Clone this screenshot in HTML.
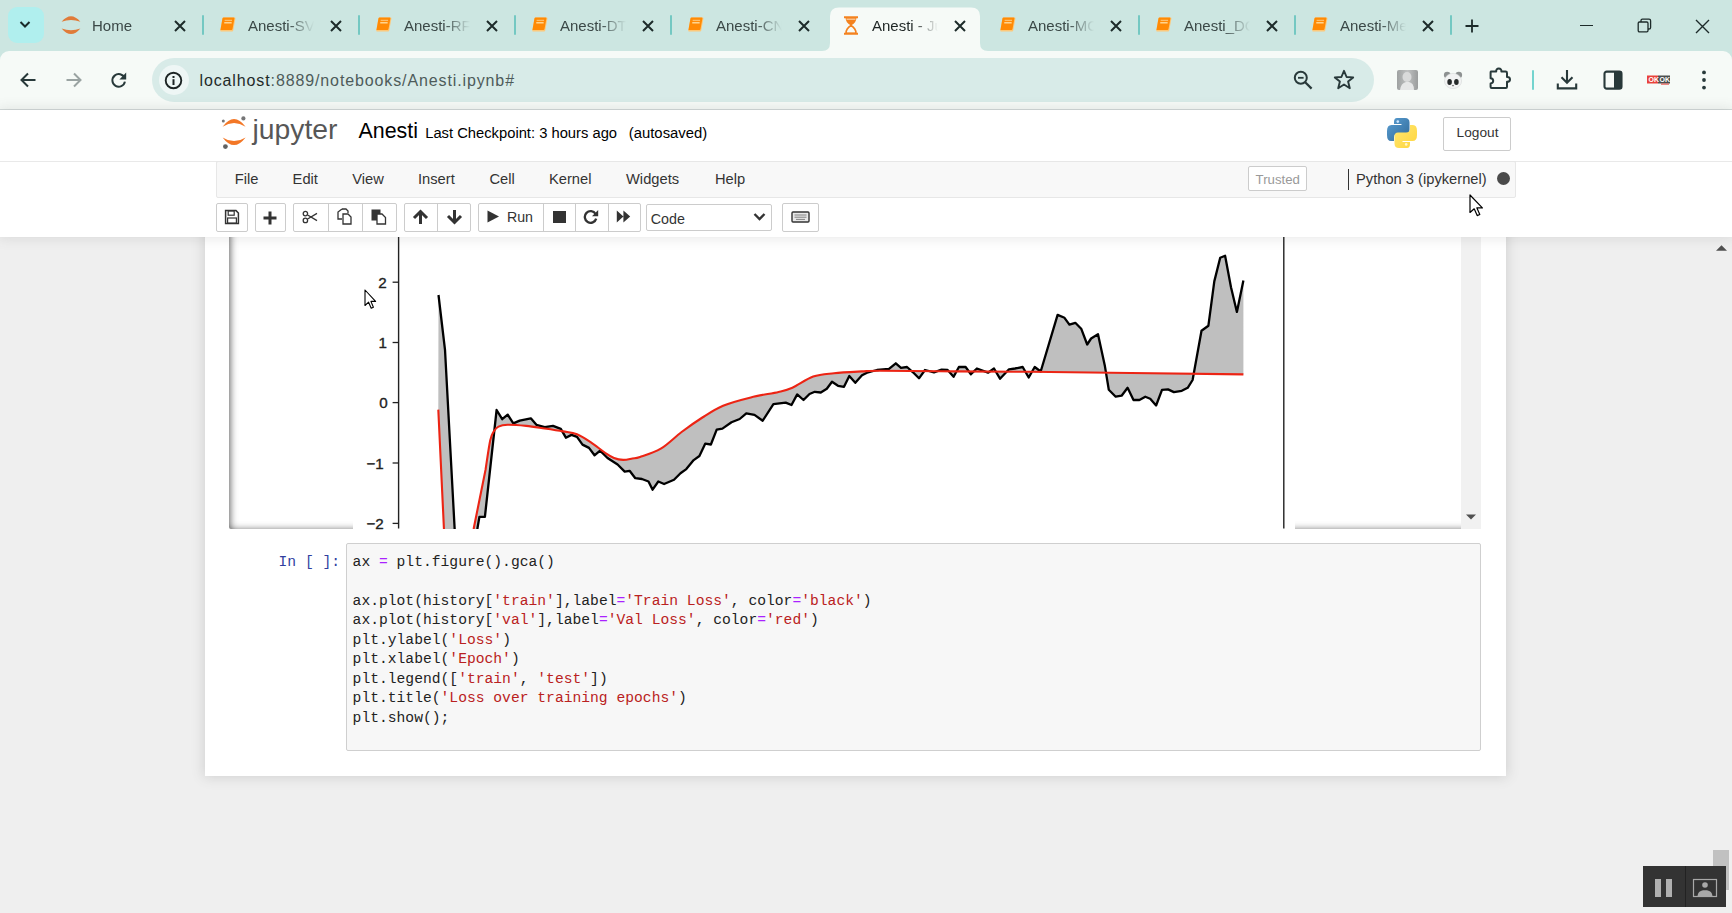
<!DOCTYPE html>
<html><head><meta charset="utf-8">
<style>
*{box-sizing:border-box;margin:0;padding:0}
html,body{width:1732px;height:913px;overflow:hidden;background:#efefef;font-family:"Liberation Sans",sans-serif;position:relative}
.a{position:absolute}
svg{display:block}
#tabstrip{left:0;top:0;width:1732px;height:70px;background:#cce6e1}
#toolbar{left:0;top:51px;width:1732px;height:58px;background:#f6faf7;border-radius:9px 9px 0 0}
#tbline{left:0;top:109px;width:1732px;height:1px;background:#d3dad9}
.ttl{position:absolute;top:16px;height:20px;font-size:15px;color:#3b4847;white-space:nowrap;overflow:hidden;line-height:20px;width:80px;
 -webkit-mask-image:linear-gradient(to right,#000 40px,transparent 66px);mask-image:linear-gradient(to right,#000 40px,transparent 66px)}
.sep{top:15px;width:2px;height:20px;background:#74c8c2;border-radius:1px}
#omni{left:152px;top:58px;width:1222px;height:44px;border-radius:22px;background:#d8ebe8}
#header{left:0;top:110px;width:1732px;height:127px;background:#fff;box-shadow:0 0 12px 1px rgba(87,87,87,.15)}
#menubar{left:216px;top:161px;width:1300px;height:37px;background:#f8f8f8;border:1px solid #e7e7e7;border-radius:2px}
.menu{top:170px;font-size:14.7px;color:#333;line-height:18px}
.btn{top:203px;height:29px;background:#fff;border:1px solid #ccc;border-radius:2px}
.bdiv{top:204px;width:1px;height:27px;background:#ccc}
#nbc{left:205px;top:150px;width:1301px;height:626px;background:#fff;box-shadow:0 0 12px 1px rgba(87,87,87,.2)}
.code{font-family:"Liberation Mono",monospace;font-size:14.67px;line-height:19.5px;color:#000;white-space:pre}
.s{color:#ba2121}.o{color:#aa22ff}
</style></head>
<body>
<div id="nbc" class="a"></div>
<div class="a" style="left:229px;top:150px;width:1252px;height:378.5px;border-radius:2px;box-shadow:inset 0 2px 8px rgba(0,0,0,.8);overflow:hidden"></div>
<div class="a" style="left:353px;top:150px;width:942px;height:378.5px;background:#fff"></div>
<div class="a" style="left:1461px;top:150px;width:20px;height:378.5px;background:#f1f1f1"></div>
<svg class="a" style="left:1466px;top:514px" width="10" height="6" viewBox="0 0 10 6"><path d="M0 0.5 H10 L5 5.5Z" fill="#505050"/></svg>
<svg class="a" style="left:229px;top:150px" width="1232" height="378.5" viewBox="229 150 1232 378.5">
<polygon points="438.5,295.0 445.0,349.8 454.6,528.0 466.0,720.0 477.5,528.0 479.4,516.9 484.9,516.9 496.6,410.0 502.2,419.2 507.7,414.6 513.3,423.4 519.7,420.6 530.8,418.3 536.4,424.8 544.7,427.1 553.0,425.9 560.8,428.9 565.9,437.7 571.5,434.9 577.0,436.8 582.5,444.6 589.0,447.9 594.5,455.3 600.1,450.6 607.5,458.0 617.6,464.5 624.7,471.6 629.6,470.8 635.3,478.2 641.9,479.0 648.5,481.5 652.6,489.7 658.3,481.5 664.1,484.0 674.0,479.8 680.5,473.3 686.3,469.1 693.7,460.1 699.4,456.0 705.2,443.7 710.9,444.5 716.7,429.7 722.4,428.6 731.5,422.3 739.7,419.0 746.3,413.3 754.5,414.9 762.7,420.7 773.4,404.2 785.7,402.6 791.5,405.0 797.2,394.4 803.5,400.0 809.5,394.0 814.8,391.8 820.8,392.5 826.8,388.8 832.0,381.7 838.0,385.8 844.0,386.8 849.3,376.0 855.3,382.8 862.0,375.3 868.0,372.3 877.0,370.0 889.0,368.8 895.8,363.3 901.0,367.8 907.0,367.0 913.0,372.3 919.0,378.3 925.0,370.0 934.0,372.3 941.6,369.7 947.6,370.0 953.6,376.8 958.9,367.0 965.6,367.0 970.9,374.2 976.9,368.5 988.0,372.7 994.0,368.5 1000.0,378.7 1009.0,369.3 1015.0,368.5 1022.7,367.0 1028.7,377.5 1034.7,367.0 1040.7,371.5 1057.6,314.9 1064.5,317.8 1069.4,324.7 1075.3,322.8 1081.2,328.7 1087.2,344.5 1091.1,338.5 1098.0,334.2 1104.9,366.1 1108.8,389.8 1115.7,396.7 1121.6,395.7 1127.6,387.8 1133.5,400.0 1139.4,400.0 1145.3,396.7 1150.2,398.7 1156.1,405.5 1162.0,389.8 1168.0,389.4 1173.9,392.1 1181.8,390.8 1187.7,387.8 1192.6,380.0 1201.5,330.7 1208.4,325.7 1214.3,281.4 1220.2,257.7 1225.1,255.8 1231.0,287.3 1236.9,311.9 1243.4,280.4 1243.4,374.4 1030.0,371.8 940.0,371.3 880.0,370.8 861.7,371.4 834.0,373.2 813.2,376.6 792.4,387.7 778.6,391.9 750.8,397.4 723.1,405.7 702.4,417.5 681.6,432.0 660.8,448.7 640.0,457.0 632.4,458.5 623.2,459.9 614.0,458.0 604.7,452.5 590.9,442.3 577.0,434.2 563.1,431.4 544.7,428.5 526.2,425.9 507.7,424.8 498.5,426.6 493.9,431.2 490.2,440.5 485.5,470.0 473.8,528.0 458.0,800.0 443.9,528.0 438.3,409.6" fill="#bfbfbf" stroke="none"/>
<polyline points="438.5,295.0 445.0,349.8 454.6,528.0 466.0,720.0 477.5,528.0 479.4,516.9 484.9,516.9 496.6,410.0 502.2,419.2 507.7,414.6 513.3,423.4 519.7,420.6 530.8,418.3 536.4,424.8 544.7,427.1 553.0,425.9 560.8,428.9 565.9,437.7 571.5,434.9 577.0,436.8 582.5,444.6 589.0,447.9 594.5,455.3 600.1,450.6 607.5,458.0 617.6,464.5 624.7,471.6 629.6,470.8 635.3,478.2 641.9,479.0 648.5,481.5 652.6,489.7 658.3,481.5 664.1,484.0 674.0,479.8 680.5,473.3 686.3,469.1 693.7,460.1 699.4,456.0 705.2,443.7 710.9,444.5 716.7,429.7 722.4,428.6 731.5,422.3 739.7,419.0 746.3,413.3 754.5,414.9 762.7,420.7 773.4,404.2 785.7,402.6 791.5,405.0 797.2,394.4 803.5,400.0 809.5,394.0 814.8,391.8 820.8,392.5 826.8,388.8 832.0,381.7 838.0,385.8 844.0,386.8 849.3,376.0 855.3,382.8 862.0,375.3 868.0,372.3 877.0,370.0 889.0,368.8 895.8,363.3 901.0,367.8 907.0,367.0 913.0,372.3 919.0,378.3 925.0,370.0 934.0,372.3 941.6,369.7 947.6,370.0 953.6,376.8 958.9,367.0 965.6,367.0 970.9,374.2 976.9,368.5 988.0,372.7 994.0,368.5 1000.0,378.7 1009.0,369.3 1015.0,368.5 1022.7,367.0 1028.7,377.5 1034.7,367.0 1040.7,371.5 1057.6,314.9 1064.5,317.8 1069.4,324.7 1075.3,322.8 1081.2,328.7 1087.2,344.5 1091.1,338.5 1098.0,334.2 1104.9,366.1 1108.8,389.8 1115.7,396.7 1121.6,395.7 1127.6,387.8 1133.5,400.0 1139.4,400.0 1145.3,396.7 1150.2,398.7 1156.1,405.5 1162.0,389.8 1168.0,389.4 1173.9,392.1 1181.8,390.8 1187.7,387.8 1192.6,380.0 1201.5,330.7 1208.4,325.7 1214.3,281.4 1220.2,257.7 1225.1,255.8 1231.0,287.3 1236.9,311.9 1243.4,280.4" fill="none" stroke="#000" stroke-width="2.3" stroke-linejoin="round"/>
<path d="M438.3,409.6 L443.9,528.0 L458.0,800.0 L473.8,528.0 L485.5,470.0 C486.3,465.1 488.8,447.0 490.2,440.5 C491.6,434.0 492.5,433.5 493.9,431.2 C495.3,428.9 496.2,427.7 498.5,426.6 C500.8,425.5 503.1,424.9 507.7,424.8 C512.3,424.7 520.0,425.3 526.2,425.9 C532.4,426.5 538.6,427.6 544.7,428.5 C550.9,429.4 557.7,430.4 563.1,431.4 C568.5,432.3 572.4,432.4 577.0,434.2 C581.6,436.0 586.3,439.2 590.9,442.3 C595.5,445.4 600.9,449.9 604.7,452.5 C608.6,455.1 610.9,456.8 614.0,458.0 C617.1,459.2 620.1,459.8 623.2,459.9 C626.3,460.0 629.6,459.0 632.4,458.5 C635.2,458.0 635.3,458.6 640.0,457.0 C644.7,455.4 653.9,452.9 660.8,448.7 C667.7,444.5 674.7,437.2 681.6,432.0 C688.5,426.8 695.5,421.9 702.4,417.5 C709.3,413.1 715.0,409.1 723.1,405.7 C731.2,402.3 741.5,399.7 750.8,397.4 C760.0,395.1 771.7,393.5 778.6,391.9 C785.5,390.3 786.6,390.2 792.4,387.7 C798.2,385.1 806.3,379.0 813.2,376.6 C820.1,374.2 825.9,374.1 834.0,373.2 C842.1,372.3 854.0,371.8 861.7,371.4 C869.4,371.0 867.0,370.8 880.0,370.8 C893.0,370.8 915.0,371.1 940.0,371.3 C965.0,371.5 979.4,371.3 1030.0,371.8 C1080.6,372.3 1207.8,374.0 1243.4,374.4" fill="none" stroke="#ec2414" stroke-width="2.1" stroke-linejoin="round"/>
<path d="M398.6 150 V528.5 M1283.8 150 V528.5" stroke="#222" stroke-width="1.4"/>
<path d="M392.6 282.2 H398.6" stroke="#222" stroke-width="1.3"/><path d="M392.6 342.5 H398.6" stroke="#222" stroke-width="1.3"/><path d="M392.6 402.6 H398.6" stroke="#222" stroke-width="1.3"/><path d="M392.6 463 H398.6" stroke="#222" stroke-width="1.3"/><path d="M392.6 523.4 H398.6" stroke="#222" stroke-width="1.3"/></svg>
<div class="a" style="left:378.3px;top:274.83px;font-family:'Liberation Sans';font-size:15.2px;line-height:15.2px;color:#222;white-space:nowrap;-webkit-text-stroke:0.35px #222;">2</div>
<div class="a" style="left:378.6px;top:335.13px;font-family:'Liberation Sans';font-size:15.2px;line-height:15.2px;color:#222;white-space:nowrap;-webkit-text-stroke:0.35px #222;">1</div>
<div class="a" style="left:379.2px;top:395.23px;font-family:'Liberation Sans';font-size:15.2px;line-height:15.2px;color:#222;white-space:nowrap;-webkit-text-stroke:0.35px #222;">0</div>
<div class="a" style="left:366.5px;top:455.63px;font-family:'Liberation Sans';font-size:15.2px;line-height:15.2px;color:#222;white-space:nowrap;-webkit-text-stroke:0.35px #222;">−1</div>
<div class="a" style="left:366.5px;top:516.03px;font-family:'Liberation Sans';font-size:15.2px;line-height:15.2px;color:#222;white-space:nowrap;-webkit-text-stroke:0.35px #222;">−2</div>
<div class="a" style="left:278.5px;top:554.98px;font-family:'Liberation Mono';font-size:14.67px;line-height:14.67px;color:#303f9f;white-space:nowrap;">In&nbsp;[&nbsp;]:</div>
<div class="a" style="left:346.4px;top:543px;width:1135px;height:208px;background:#f7f7f7;border:1px solid #cfcfcf;border-radius:2px"></div>
<div class="a" style="left:352.6px;top:554.98px;font-family:'Liberation Mono';font-size:14.67px;line-height:14.67px;color:#222;white-space:nowrap;white-space:pre;">ax <span class="o">=</span> plt.figure().gca()</div>
<div class="a" style="left:352.6px;top:593.98px;font-family:'Liberation Mono';font-size:14.67px;line-height:14.67px;color:#222;white-space:nowrap;white-space:pre;">ax.plot(history[<span class="s">'train'</span>],label<span class="o">=</span><span class="s">'Train Loss'</span>, color<span class="o">=</span><span class="s">'black'</span>)</div>
<div class="a" style="left:352.6px;top:613.48px;font-family:'Liberation Mono';font-size:14.67px;line-height:14.67px;color:#222;white-space:nowrap;white-space:pre;">ax.plot(history[<span class="s">'val'</span>],label<span class="o">=</span><span class="s">'Val Loss'</span>, color<span class="o">=</span><span class="s">'red'</span>)</div>
<div class="a" style="left:352.6px;top:632.98px;font-family:'Liberation Mono';font-size:14.67px;line-height:14.67px;color:#222;white-space:nowrap;white-space:pre;">plt.ylabel(<span class="s">'Loss'</span>)</div>
<div class="a" style="left:352.6px;top:652.48px;font-family:'Liberation Mono';font-size:14.67px;line-height:14.67px;color:#222;white-space:nowrap;white-space:pre;">plt.xlabel(<span class="s">'Epoch'</span>)</div>
<div class="a" style="left:352.6px;top:671.98px;font-family:'Liberation Mono';font-size:14.67px;line-height:14.67px;color:#222;white-space:nowrap;white-space:pre;">plt.legend([<span class="s">'train'</span>, <span class="s">'test'</span>])</div>
<div class="a" style="left:352.6px;top:691.48px;font-family:'Liberation Mono';font-size:14.67px;line-height:14.67px;color:#222;white-space:nowrap;white-space:pre;">plt.title(<span class="s">'Loss over training epochs'</span>)</div>
<div class="a" style="left:352.6px;top:710.98px;font-family:'Liberation Mono';font-size:14.67px;line-height:14.67px;color:#222;white-space:nowrap;white-space:pre;">plt.show();</div>
<div class="a" style="left:1712px;top:237px;width:20px;height:676px;background:#efefef"></div>
<svg class="a" style="left:1716px;top:245px" width="11" height="6" viewBox="0 0 11 6"><path d="M0 5.8 H11 L5.5 0.2Z" fill="#505050"/></svg>
<div class="a" style="left:1713px;top:850px;width:16px;height:40px;background:#c1c1c1"></div>
<div id="tabstrip" class="a"></div>
<div class="a" style="left:8px;top:7px;width:36px;height:36px;border-radius:9px;background:#b0efee"></div>
<svg class="a" style="left:19px;top:20px" width="12" height="9" viewBox="0 0 12 9"><path d="M1.5 2 L6 6.5 L10.5 2" fill="none" stroke="#1a2b2a" stroke-width="2"/></svg>
<svg class="a" style="left:822px;top:6px" width="166" height="45" viewBox="0 0 166 45"><path d="M0 45 Q8 45 8 37 V10 Q8 1.5 17 1.5 H149 Q158 1.5 158 10 V37 Q158 45 166 45 Z" fill="#f6faf7"/></svg>
<svg class="a" style="left:61px;top:15px" width="20" height="21" viewBox="0 0 20 21"><path d="M0.6 6.8 Q10 -4.2 19.4 6.8 Q10 3.2 0.6 6.8Z" fill="#e07b39"/><path d="M0.6 13.4 Q10 24.6 19.4 13.4 Q10 17 0.6 13.4Z" fill="#e07b39"/></svg>
<div class="ttl" style="left:92px;color:#3b4847">Home</div>
<svg class="a" style="left:174px;top:20px" width="12" height="12" viewBox="0 0 12 12"><path d="M1 1 L11 11 M11 1 L1 11" stroke="#1d2b2a" stroke-width="2"/></svg>
<svg class="a" style="left:217.5px;top:17px" width="19" height="16" viewBox="-0.8 0 18.5 16">
<path d="M4.6 0.6 H15.6 Q16.6 0.6 16.4 1.6 L14.2 13.6 Q14 14.6 13 14.6 H2 Q1 14.6 1.2 13.6 L3.4 1.6 Q3.6 0.6 4.6 0.6Z" fill="#fec879"/>
<path d="M4.6 0.6 H14.6 Q15.6 0.6 15.4 1.6 L13.4 12.2 Q13.2 13 12.4 13 H1.4 L3.4 1.6 Q3.6 0.6 4.6 0.6Z" fill="#ff8a05"/>
<path d="M5.6 3.4 H13" stroke="#ffbf6a" stroke-width="1.3"/><path d="M5.2 5.8 H12.6" stroke="#ffe2a8" stroke-width="1.3"/>
</svg>
<div class="ttl" style="left:248px;color:#3b4847">Anesti-SV</div>
<svg class="a" style="left:330px;top:20px" width="12" height="12" viewBox="0 0 12 12"><path d="M1 1 L11 11 M11 1 L1 11" stroke="#1d2b2a" stroke-width="2"/></svg>
<svg class="a" style="left:373.5px;top:17px" width="19" height="16" viewBox="-0.8 0 18.5 16">
<path d="M4.6 0.6 H15.6 Q16.6 0.6 16.4 1.6 L14.2 13.6 Q14 14.6 13 14.6 H2 Q1 14.6 1.2 13.6 L3.4 1.6 Q3.6 0.6 4.6 0.6Z" fill="#fec879"/>
<path d="M4.6 0.6 H14.6 Q15.6 0.6 15.4 1.6 L13.4 12.2 Q13.2 13 12.4 13 H1.4 L3.4 1.6 Q3.6 0.6 4.6 0.6Z" fill="#ff8a05"/>
<path d="M5.6 3.4 H13" stroke="#ffbf6a" stroke-width="1.3"/><path d="M5.2 5.8 H12.6" stroke="#ffe2a8" stroke-width="1.3"/>
</svg>
<div class="ttl" style="left:404px;color:#3b4847">Anesti-RF</div>
<svg class="a" style="left:486px;top:20px" width="12" height="12" viewBox="0 0 12 12"><path d="M1 1 L11 11 M11 1 L1 11" stroke="#1d2b2a" stroke-width="2"/></svg>
<svg class="a" style="left:529.5px;top:17px" width="19" height="16" viewBox="-0.8 0 18.5 16">
<path d="M4.6 0.6 H15.6 Q16.6 0.6 16.4 1.6 L14.2 13.6 Q14 14.6 13 14.6 H2 Q1 14.6 1.2 13.6 L3.4 1.6 Q3.6 0.6 4.6 0.6Z" fill="#fec879"/>
<path d="M4.6 0.6 H14.6 Q15.6 0.6 15.4 1.6 L13.4 12.2 Q13.2 13 12.4 13 H1.4 L3.4 1.6 Q3.6 0.6 4.6 0.6Z" fill="#ff8a05"/>
<path d="M5.6 3.4 H13" stroke="#ffbf6a" stroke-width="1.3"/><path d="M5.2 5.8 H12.6" stroke="#ffe2a8" stroke-width="1.3"/>
</svg>
<div class="ttl" style="left:560px;color:#3b4847">Anesti-DT</div>
<svg class="a" style="left:642px;top:20px" width="12" height="12" viewBox="0 0 12 12"><path d="M1 1 L11 11 M11 1 L1 11" stroke="#1d2b2a" stroke-width="2"/></svg>
<svg class="a" style="left:685.5px;top:17px" width="19" height="16" viewBox="-0.8 0 18.5 16">
<path d="M4.6 0.6 H15.6 Q16.6 0.6 16.4 1.6 L14.2 13.6 Q14 14.6 13 14.6 H2 Q1 14.6 1.2 13.6 L3.4 1.6 Q3.6 0.6 4.6 0.6Z" fill="#fec879"/>
<path d="M4.6 0.6 H14.6 Q15.6 0.6 15.4 1.6 L13.4 12.2 Q13.2 13 12.4 13 H1.4 L3.4 1.6 Q3.6 0.6 4.6 0.6Z" fill="#ff8a05"/>
<path d="M5.6 3.4 H13" stroke="#ffbf6a" stroke-width="1.3"/><path d="M5.2 5.8 H12.6" stroke="#ffe2a8" stroke-width="1.3"/>
</svg>
<div class="ttl" style="left:716px;color:#3b4847">Anesti-CN</div>
<svg class="a" style="left:798px;top:20px" width="12" height="12" viewBox="0 0 12 12"><path d="M1 1 L11 11 M11 1 L1 11" stroke="#1d2b2a" stroke-width="2"/></svg>
<svg class="a" style="left:843px;top:16px" width="16" height="19" viewBox="0 0 16 19"><path d="M1 1.2 H15 M1 17.8 H15" stroke="#f4821f" stroke-width="2"/><path d="M2.6 2 H13.4 Q13.4 6.5 8 9.5 Q2.6 6.5 2.6 2Z" fill="#f4821f"/><path d="M8 9.5 Q3 12.5 3 17.2 H13 Q13 12.5 8 9.5Z" fill="none" stroke="#f4821f" stroke-width="1.6"/><path d="M3.5 3.2 H12.5" stroke="#fde6cc" stroke-width="0.9"/></svg>
<div class="ttl" style="left:872px;color:#1f2625">Anesti - Jupyter</div>
<svg class="a" style="left:954px;top:20px" width="12" height="12" viewBox="0 0 12 12"><path d="M1 1 L11 11 M11 1 L1 11" stroke="#1d2b2a" stroke-width="2"/></svg>
<svg class="a" style="left:997.5px;top:17px" width="19" height="16" viewBox="-0.8 0 18.5 16">
<path d="M4.6 0.6 H15.6 Q16.6 0.6 16.4 1.6 L14.2 13.6 Q14 14.6 13 14.6 H2 Q1 14.6 1.2 13.6 L3.4 1.6 Q3.6 0.6 4.6 0.6Z" fill="#fec879"/>
<path d="M4.6 0.6 H14.6 Q15.6 0.6 15.4 1.6 L13.4 12.2 Q13.2 13 12.4 13 H1.4 L3.4 1.6 Q3.6 0.6 4.6 0.6Z" fill="#ff8a05"/>
<path d="M5.6 3.4 H13" stroke="#ffbf6a" stroke-width="1.3"/><path d="M5.2 5.8 H12.6" stroke="#ffe2a8" stroke-width="1.3"/>
</svg>
<div class="ttl" style="left:1028px;color:#3b4847">Anesti-MC</div>
<svg class="a" style="left:1110px;top:20px" width="12" height="12" viewBox="0 0 12 12"><path d="M1 1 L11 11 M11 1 L1 11" stroke="#1d2b2a" stroke-width="2"/></svg>
<svg class="a" style="left:1153.5px;top:17px" width="19" height="16" viewBox="-0.8 0 18.5 16">
<path d="M4.6 0.6 H15.6 Q16.6 0.6 16.4 1.6 L14.2 13.6 Q14 14.6 13 14.6 H2 Q1 14.6 1.2 13.6 L3.4 1.6 Q3.6 0.6 4.6 0.6Z" fill="#fec879"/>
<path d="M4.6 0.6 H14.6 Q15.6 0.6 15.4 1.6 L13.4 12.2 Q13.2 13 12.4 13 H1.4 L3.4 1.6 Q3.6 0.6 4.6 0.6Z" fill="#ff8a05"/>
<path d="M5.6 3.4 H13" stroke="#ffbf6a" stroke-width="1.3"/><path d="M5.2 5.8 H12.6" stroke="#ffe2a8" stroke-width="1.3"/>
</svg>
<div class="ttl" style="left:1184px;color:#3b4847">Anesti_DC</div>
<svg class="a" style="left:1266px;top:20px" width="12" height="12" viewBox="0 0 12 12"><path d="M1 1 L11 11 M11 1 L1 11" stroke="#1d2b2a" stroke-width="2"/></svg>
<svg class="a" style="left:1309.5px;top:17px" width="19" height="16" viewBox="-0.8 0 18.5 16">
<path d="M4.6 0.6 H15.6 Q16.6 0.6 16.4 1.6 L14.2 13.6 Q14 14.6 13 14.6 H2 Q1 14.6 1.2 13.6 L3.4 1.6 Q3.6 0.6 4.6 0.6Z" fill="#fec879"/>
<path d="M4.6 0.6 H14.6 Q15.6 0.6 15.4 1.6 L13.4 12.2 Q13.2 13 12.4 13 H1.4 L3.4 1.6 Q3.6 0.6 4.6 0.6Z" fill="#ff8a05"/>
<path d="M5.6 3.4 H13" stroke="#ffbf6a" stroke-width="1.3"/><path d="M5.2 5.8 H12.6" stroke="#ffe2a8" stroke-width="1.3"/>
</svg>
<div class="ttl" style="left:1340px;color:#3b4847">Anesti-Meta</div>
<svg class="a" style="left:1422px;top:20px" width="12" height="12" viewBox="0 0 12 12"><path d="M1 1 L11 11 M11 1 L1 11" stroke="#1d2b2a" stroke-width="2"/></svg>
<div class="a sep" style="left:202px"></div>
<div class="a sep" style="left:358px"></div>
<div class="a sep" style="left:514px"></div>
<div class="a sep" style="left:670px"></div>
<div class="a sep" style="left:1138px"></div>
<div class="a sep" style="left:1294px"></div>
<div class="a sep" style="left:1450px"></div>
<svg class="a" style="left:1465px;top:19px" width="14" height="14" viewBox="0 0 14 14"><path d="M7 0.5 V13.5 M0.5 7 H13.5" stroke="#1d2b2a" stroke-width="1.8"/></svg>
<div class="a" style="left:1580px;top:25px;width:13px;height:1.3px;background:#1d2b2a"></div>
<svg class="a" style="left:1637px;top:18px" width="15" height="15" viewBox="0 0 15 15"><rect x="1.2" y="4" width="9.8" height="9.8" rx="1.2" fill="none" stroke="#1d2b2a" stroke-width="1.3"/><path d="M4 4 V2.6 Q4 1.2 5.4 1.2 H12 Q13.6 1.2 13.6 2.8 V9.4 Q13.6 11 12 11 H11" fill="none" stroke="#1d2b2a" stroke-width="1.3"/></svg>
<svg class="a" style="left:1695px;top:19px" width="15" height="15" viewBox="0 0 15 15"><path d="M1 1 L14 14 M14 1 L1 14" stroke="#1d2b2a" stroke-width="1.4"/></svg>
<div id="toolbar" class="a"></div>
<div id="tbline" class="a"></div>
<!-- back -->
<svg class="a" style="left:19px;top:71px" width="18" height="18" viewBox="0 0 18 18"><path d="M16.5 9 H3 M9 2.5 L2.5 9 L9 15.5" fill="none" stroke="#28393a" stroke-width="2"/></svg>
<svg class="a" style="left:65px;top:71px" width="18" height="18" viewBox="0 0 18 18"><path d="M1.5 9 H15 M9 2.5 L15.5 9 L9 15.5" fill="none" stroke="#9aa3a2" stroke-width="2"/></svg>
<svg class="a" style="left:110px;top:71px" width="18" height="18" viewBox="0 0 18 18"><path d="M14.6 7.2 A6.3 6.3 0 1 0 14.9 10.6" fill="none" stroke="#28393a" stroke-width="2"/><path d="M16.2 1.6 V8.4 H9.4 Z" fill="#28393a"/></svg>
<div id="omni" class="a"></div>
<div class="a" style="left:159px;top:65px;width:30px;height:30px;border-radius:15px;background:#eef6f5"></div>
<svg class="a" style="left:164px;top:71px" width="19" height="19" viewBox="0 0 19 19"><circle cx="9.5" cy="9.5" r="7.8" fill="none" stroke="#1d2424" stroke-width="1.9"/><rect x="8.5" y="5" width="2" height="2" fill="#1d2424"/><rect x="8.5" y="8.2" width="2" height="5.8" fill="#1d2424"/></svg>
<div class="a" style="left:199.5px;top:70.8px;font-size:16px;letter-spacing:0.88px;color:#1f2a29;line-height:20px;white-space:nowrap">localhost<span style="color:#4e5b5a">:8889/notebooks/Anesti.ipynb#</span></div>
<!-- zoom -->
<svg class="a" style="left:1293px;top:70px" width="20" height="20" viewBox="0 0 20 20"><circle cx="7.8" cy="7.8" r="6" fill="none" stroke="#28393a" stroke-width="2"/><path d="M12.2 12.2 L18.6 18.6" stroke="#28393a" stroke-width="2.2"/><path d="M5 7.8 H10.6" stroke="#28393a" stroke-width="1.8"/></svg>
<svg class="a" style="left:1333px;top:69px" width="22" height="21" viewBox="0 0 22 21"><path d="M11 1.8 L13.6 8 L20.2 8.4 L15.1 12.6 L16.8 19.2 L11 15.5 L5.2 19.2 L6.9 12.6 L1.8 8.4 L8.4 8 Z" fill="none" stroke="#28393a" stroke-width="1.9" stroke-linejoin="round"/></svg>
<!-- ext 1 -->
<div class="a" style="left:1397px;top:70px;width:21px;height:20px;border-radius:2px;background:linear-gradient(90deg,#9ea1a1,#bfc1c1 50%,#9b9d9d)"></div>
<svg class="a" style="left:1397px;top:70px" width="21" height="20" viewBox="0 0 21 20"><ellipse cx="10" cy="7" rx="4.5" ry="5" fill="#d9dada"/><path d="M3 20 Q4 13 9 12 L12 12 Q17 13 17 20Z" fill="#e6e7e7"/></svg>
<!-- panda -->
<svg class="a" style="left:1442px;top:70px" width="22" height="19" viewBox="0 0 22 19"><circle cx="5.2" cy="5" r="3.3" fill="#8d9191"/><circle cx="16.8" cy="5" r="3.3" fill="#8d9191"/><ellipse cx="11" cy="11" rx="8.6" ry="7.6" fill="#f2f3f3" stroke="#d5d8d8" stroke-width="0.6"/><ellipse cx="7.6" cy="12" rx="2.3" ry="2.9" fill="#262a2a"/><ellipse cx="14.4" cy="12" rx="2.3" ry="2.9" fill="#262a2a"/><path d="M9.9 15.2 H12.1 L11 16.6Z" fill="#333"/></svg>
<!-- puzzle -->
<svg class="a" style="left:1488px;top:67px" width="24" height="23" viewBox="0 0 24 23"><path d="M2.8 4.6 H8.2 Q8 1.6 10.8 1.6 Q13.6 1.6 13.4 4.6 H17.6 Q19 4.6 19 6 V10 Q22 10 22 12.4 Q22 14.8 19 14.8 V19.8 Q19 21 17.8 21 H3.6 Q2.6 21 2.6 20 V16.4 Q5.2 16.2 5.2 13.8 Q5.2 11.4 2.6 11.2 V5.4 Q2.6 4.6 2.8 4.6Z" fill="none" stroke="#28393a" stroke-width="2" stroke-linejoin="round"/></svg>
<div class="a" style="left:1532px;top:70px;width:2px;height:20px;background:#74d4cf;border-radius:1px"></div>
<!-- download -->
<svg class="a" style="left:1556px;top:69px" width="22" height="21" viewBox="0 0 22 21"><path d="M11 1 V13.5 M5.5 8.2 L11 13.7 L16.5 8.2" fill="none" stroke="#28393a" stroke-width="2.1"/><path d="M1.8 14.5 V19.4 H20.2 V14.5" fill="none" stroke="#28393a" stroke-width="2.1"/></svg>
<!-- sidebar -->
<svg class="a" style="left:1603px;top:70px" width="20" height="20" viewBox="0 0 20 20"><rect x="1.5" y="1.6" width="17" height="17" rx="2.2" fill="none" stroke="#28393a" stroke-width="2.1"/><rect x="11" y="1.6" width="7.5" height="17" fill="#28393a"/></svg>
<!-- ok badge -->
<svg class="a" style="left:1647px;top:75px" width="24" height="10" viewBox="0 0 24 10"><rect x="0" y="0.5" width="11" height="8" fill="#e8423b"/><rect x="11" y="0.5" width="12" height="8" fill="#4b4f4f"/><text x="1.5" y="7" font-family="Liberation Sans" font-weight="bold" font-size="7" fill="#fff">OK</text><text x="12.5" y="7" font-family="Liberation Sans" font-weight="bold" font-size="7" fill="#fff">OK</text><rect x="14" y="8.6" width="8" height="1" fill="#e8423b"/></svg>
<!-- kebab -->
<svg class="a" style="left:1701px;top:70px" width="6" height="20" viewBox="0 0 6 20"><circle cx="3" cy="2.4" r="1.9" fill="#28393a"/><circle cx="3" cy="10" r="1.9" fill="#28393a"/><circle cx="3" cy="17.6" r="1.9" fill="#28393a"/></svg>
<div id="header" class="a"></div>
<svg class="a" style="left:219px;top:115px" width="30" height="36" viewBox="0 0 30 36">
<path d="M3.6 11.8 Q15 -3.6 26.6 11.8 Q15 4.4 3.6 11.8Z" fill="#f37726"/>
<path d="M3.6 22.4 Q15 37.6 26.6 22.4 Q15 29.8 3.6 22.4Z" fill="#f37726"/>
<circle cx="24.4" cy="3.4" r="2.1" fill="#767677"/><circle cx="4.3" cy="6.1" r="1.5" fill="#767677"/><circle cx="6.4" cy="31.6" r="2.4" fill="#616262"/>
</svg>
<div class="a" style="left:252.5px;top:114.94px;font-family:'Liberation Sans';font-size:28.3px;line-height:28.3px;color:#575757;white-space:nowrap;">jupyter</div>
<div class="a" style="left:358.5px;top:121.28px;font-family:'Liberation Sans';font-size:21.4px;line-height:21.4px;color:#000;white-space:nowrap;">Anesti</div>
<div class="a" style="left:425.2px;top:125.71px;font-family:'Liberation Sans';font-size:14.76px;line-height:14.76px;color:#000;white-space:nowrap;">Last Checkpoint: 3 hours ago</div>
<div class="a" style="left:628.8px;top:125.63px;font-family:'Liberation Sans';font-size:14.85px;line-height:14.85px;color:#000;white-space:nowrap;">(autosaved)</div>
<svg class="a" style="left:1386px;top:117px" width="32" height="32" viewBox="0 0 32 32">
<defs><linearGradient id="pb" x1="0" y1="0" x2="1" y2="1"><stop offset="0" stop-color="#5a9fd4"/><stop offset="1" stop-color="#306998"/></linearGradient>
<linearGradient id="py" x1="0" y1="0" x2="1" y2="1"><stop offset="0" stop-color="#ffe873"/><stop offset="1" stop-color="#ffd43b"/></linearGradient></defs>
<path d="M11 1 H19 Q23.5 1 23.5 5.5 V13 Q23.5 16.5 20 16.5 H12 Q8 16.5 8 20.5 V24 H5 Q1 24 1 18 V14 Q1 8 5.5 8 H15.5 V7 H8 V5 Q8 1 11 1Z" fill="url(#pb)"/>
<circle cx="11.8" cy="4.6" r="1.3" fill="#cfe6ff"/>
<path d="M21 31 H13 Q8.5 31 8.5 26.5 V19 Q8.5 15.5 12 15.5 H20 Q24 15.5 24 11.5 V8 H27 Q31 8 31 14 V18 Q31 24 26.5 24 H16.5 V25 H24 V27 Q24 31 21 31Z" fill="url(#py)"/>
<circle cx="20.2" cy="27.4" r="1.3" fill="#fff6c8"/>
</svg>
<div class="a" style="left:1443px;top:117px;width:68px;height:34px;border:1px solid #ccc;border-radius:2px;background:#fff"></div>
<div class="a" style="left:1456.6px;top:126.40px;font-family:'Liberation Sans';font-size:13.7px;line-height:13.7px;color:#333;white-space:nowrap;">Logout</div>
<div class="a" style="left:0;top:161px;width:1732px;height:1px;background:#e9e9e9"></div>
<div id="menubar" class="a"></div>
<div class="a" style="left:234.8px;top:171.76px;font-family:'Liberation Sans';font-size:14.7px;line-height:14.7px;color:#333;white-space:nowrap;">File</div>
<div class="a" style="left:292.6px;top:171.76px;font-family:'Liberation Sans';font-size:14.7px;line-height:14.7px;color:#333;white-space:nowrap;">Edit</div>
<div class="a" style="left:352.3px;top:171.76px;font-family:'Liberation Sans';font-size:14.7px;line-height:14.7px;color:#333;white-space:nowrap;">View</div>
<div class="a" style="left:418px;top:171.76px;font-family:'Liberation Sans';font-size:14.7px;line-height:14.7px;color:#333;white-space:nowrap;">Insert</div>
<div class="a" style="left:489.5px;top:171.76px;font-family:'Liberation Sans';font-size:14.7px;line-height:14.7px;color:#333;white-space:nowrap;">Cell</div>
<div class="a" style="left:549px;top:171.76px;font-family:'Liberation Sans';font-size:14.7px;line-height:14.7px;color:#333;white-space:nowrap;">Kernel</div>
<div class="a" style="left:626px;top:171.76px;font-family:'Liberation Sans';font-size:14.7px;line-height:14.7px;color:#333;white-space:nowrap;">Widgets</div>
<div class="a" style="left:715px;top:171.76px;font-family:'Liberation Sans';font-size:14.7px;line-height:14.7px;color:#333;white-space:nowrap;">Help</div>
<div class="a" style="left:1248px;top:166px;width:59px;height:25px;border:1px solid #ccc;border-radius:2px;background:#fff"></div>
<div class="a" style="left:1255.6px;top:172.93px;font-family:'Liberation Sans';font-size:13.2px;line-height:13.2px;color:#999;white-space:nowrap;">Trusted</div>
<div class="a" style="left:1347.6px;top:169px;width:1.6px;height:21px;background:#333"></div>
<div class="a" style="left:1356px;top:171.66px;font-family:'Liberation Sans';font-size:14.7px;line-height:14.7px;color:#333;white-space:nowrap;">Python 3 (ipykernel)</div>
<div class="a" style="left:1497px;top:172.4px;width:13px;height:13px;border-radius:7px;background:#4a4a4a"></div>
<div class="a btn" style="left:216px;width:32px"></div>
<div class="a btn" style="left:255px;width:31px"></div>
<div class="a btn" style="left:293px;width:103.5px"></div>
<div class="a bdiv" style="left:327.5px"></div>
<div class="a bdiv" style="left:362px"></div>
<div class="a btn" style="left:403.5px;width:67.5px"></div>
<div class="a bdiv" style="left:437px"></div>
<div class="a btn" style="left:477.5px;width:163.0px"></div>
<div class="a bdiv" style="left:542.5px"></div>
<div class="a bdiv" style="left:575px"></div>
<div class="a bdiv" style="left:607.5px"></div>
<div class="a" style="left:645.6px;top:204.4px;width:126.2px;height:26.4px;border:1px solid #ccc;border-radius:2px;background:#fff"></div>
<div class="a" style="left:650.8px;top:212.20px;font-family:'Liberation Sans';font-size:14.3px;line-height:14.3px;color:#333;white-space:nowrap;">Code</div>
<svg class="a" style="left:753px;top:212px" width="13" height="10" viewBox="0 0 13 10"><path d="M1.5 2 L6.5 7 L11.5 2" fill="none" stroke="#333" stroke-width="2.4"/></svg>
<div class="a btn" style="left:782.4px;width:36.39999999999998px"></div>
<div class="a" style="left:506.9px;top:209.98px;font-family:'Liberation Sans';font-size:14.2px;line-height:14.2px;color:#333;white-space:nowrap;">Run</div>
<svg class="a" style="left:224px;top:209px" width="16" height="16" viewBox="0 0 16 16"><path d="M1.6 1.6 H12 L14.4 4 V14.4 H1.6Z" fill="none" stroke="#333" stroke-width="1.5"/><rect x="4.2" y="2" width="6" height="4.2" fill="none" stroke="#333" stroke-width="1.2"/><rect x="3.6" y="9" width="8.8" height="5" fill="#fff" stroke="#333" stroke-width="1.2"/></svg>
<svg class="a" style="left:263px;top:211px" width="14" height="14" viewBox="0 0 14 14"><path d="M7 0.5 V13.5 M0.5 7 H13.5" stroke="#333" stroke-width="3"/></svg>
<svg class="a" style="left:302px;top:209px" width="16" height="16" viewBox="0 0 16 16"><circle cx="3.4" cy="4.6" r="2.2" fill="none" stroke="#333" stroke-width="1.3"/><circle cx="3.4" cy="11.4" r="2.2" fill="none" stroke="#333" stroke-width="1.3"/><path d="M5.2 5.8 L15 11.6 M5.2 10.2 L15 4.4" stroke="#333" stroke-width="1.3"/></svg>
<svg class="a" style="left:336px;top:208px" width="17" height="17" viewBox="0 0 17 17"><path d="M6 1 H10 L12 3 V5 M6 1 L2 4 V11 H6" fill="none" stroke="#333" stroke-width="1.3"/><path d="M7 6 H12 L15 9 V16 H7Z" fill="none" stroke="#333" stroke-width="1.3"/></svg>
<svg class="a" style="left:370px;top:208px" width="17" height="17" viewBox="0 0 17 17"><rect x="1.5" y="1.5" width="9" height="11" fill="#333"/><path d="M7 6 H12 L15.5 9.5 V16 H7Z" fill="#fff" stroke="#333" stroke-width="1.3"/></svg>
<svg class="a" style="left:412px;top:209px" width="17" height="16" viewBox="0 0 17 16"><path d="M8.5 15 V3 M2 9 L8.5 2.5 L15 9" fill="none" stroke="#333" stroke-width="3"/></svg>
<svg class="a" style="left:446px;top:209px" width="17" height="16" viewBox="0 0 17 16"><path d="M8.5 1 V13 M2 7 L8.5 13.5 L15 7" fill="none" stroke="#333" stroke-width="3"/></svg>
<svg class="a" style="left:487px;top:210px" width="13" height="13" viewBox="0 0 13 13"><path d="M0.5 0.4 L12 6.5 L0.5 12.6Z" fill="#333"/></svg>
<svg class="a" style="left:552.6px;top:210.6px" width="13" height="12.3" viewBox="0 0 13 12.3"><rect width="13" height="12.3" fill="#333"/></svg>
<svg class="a" style="left:583px;top:209px" width="16" height="15" viewBox="0 0 16 15"><path d="M12.6 5 A5.8 5.8 0 1 0 13.2 9.6" fill="none" stroke="#333" stroke-width="2.3"/><path d="M15.2 1 V7.2 H9Z" fill="#333"/></svg>
<svg class="a" style="left:616px;top:210px" width="15" height="13" viewBox="0 0 15 13"><path d="M0.8 0.5 L7.4 6.5 L0.8 12.5Z M7.4 0.5 L14.2 6.5 L7.4 12.5Z" fill="#333"/></svg>
<svg class="a" style="left:791px;top:211px" width="19" height="12" viewBox="0 0 19 12"><rect x="1" y="1" width="17" height="10" rx="1" fill="#e8e8e8" stroke="#333" stroke-width="1.4"/><path d="M3.5 4 H15.5 M3.5 6.2 H15.5 M5 8.4 H14" stroke="#777" stroke-width="0.9"/></svg>
<!-- recorder overlay -->
<div class="a" style="left:1643px;top:866px;width:83px;height:40.5px;background:#333"></div>
<div class="a" style="left:1684.5px;top:866px;width:1px;height:40.5px;background:#222"></div>
<div class="a" style="left:1655px;top:879px;width:6px;height:17.5px;background:#b0b0b0"></div>
<div class="a" style="left:1666px;top:879px;width:6px;height:17.5px;background:#b0b0b0"></div>
<svg class="a" style="left:1692px;top:878px" width="26" height="20" viewBox="0 0 26 20"><rect x="1.5" y="1.5" width="23" height="17" fill="none" stroke="#a8a8a8" stroke-width="1.2"/><circle cx="13" cy="7" r="2.8" fill="#a8a8a8"/><path d="M5.5 18 Q6 13 11 12.2 H15 Q20 13 20.5 18Z" fill="#a8a8a8"/></svg>
<!-- cursors -->
<svg class="a" style="left:364px;top:289px" width="13" height="21" viewBox="0 0 13 21"><path d="M1 1 V16.5 L4.6 13.2 L7.2 19.2 L9.4 18.2 L6.9 12.4 H11.6 Z" fill="#fff" stroke="#000" stroke-width="1.1" stroke-linejoin="round"/></svg>
<svg class="a" style="left:1469px;top:194px" width="15" height="24" viewBox="0 0 15 24"><path d="M1 1 V18.5 L5.2 14.8 L8.2 21.6 L10.8 20.5 L7.9 13.9 H13.4 Z" fill="#fff" stroke="#000" stroke-width="1.2" stroke-linejoin="round"/></svg>
</body></html>
